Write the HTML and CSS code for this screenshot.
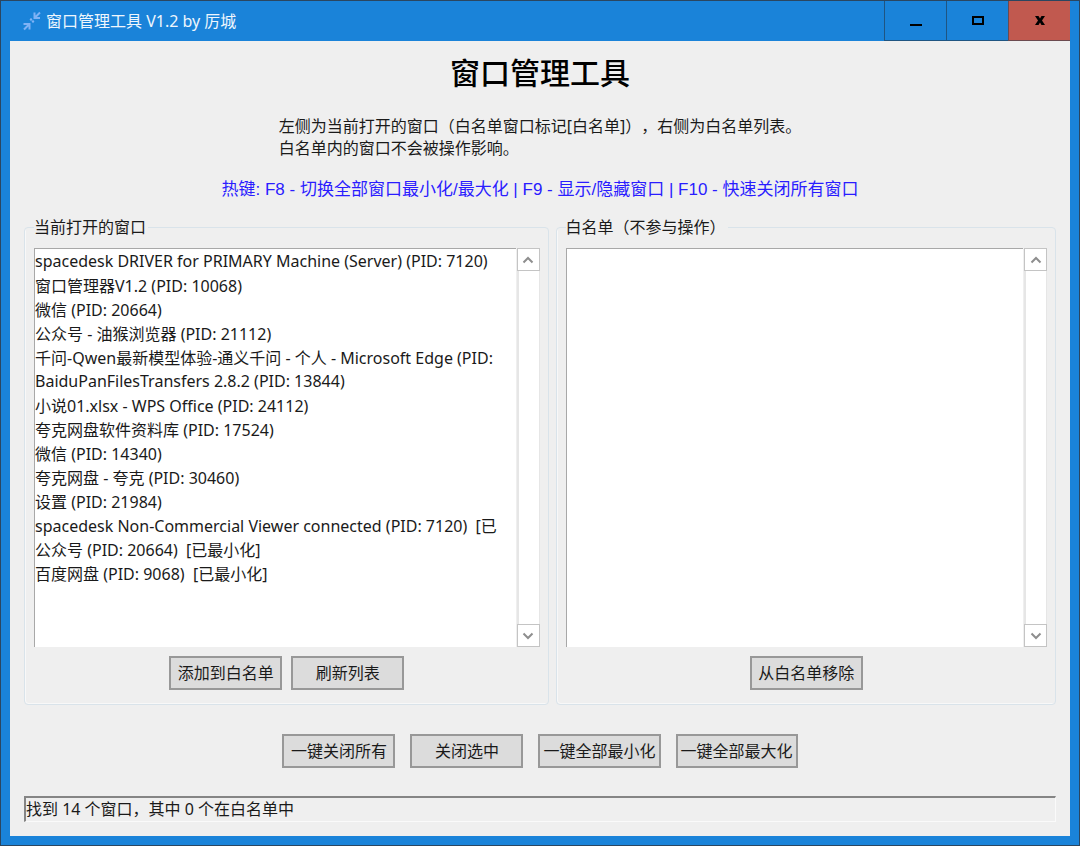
FILE: index.html
```html
<!DOCTYPE html>
<html lang="zh-CN">
<head>
<meta charset="utf-8">
<title>窗口管理工具 V1.2 by 厉城</title>
<link rel="stylesheet" href="styles.css">
</head>
<body>
<div class="window">
  <header class="titlebar">
    <svg class="app-icon" width="20" height="20" viewBox="0 0 20 20" fill="none" stroke="#7fb2f5" stroke-width="2" aria-hidden="true">
      <path d="M18 1.500 12.500 7M12.500 1.500V7H18M2 18.500 7.500 13M1.500 13H7.500V18.500"/>
      <circle cx="9" cy="8.500" r="1.200" fill="#7fb2f5" stroke="none"/>
      <circle cx="11" cy="10.500" r="1.200" fill="#7fb2f5" stroke="none"/>
    </svg>
    <span class="caption">窗口管理工具 V1.2 by 厉城</span>
    <div class="controls">
      <button class="control" aria-label="最小化"><svg width="14" height="12" viewBox="0 0 14 12"><path d="M1 9h12v2H1z"/></svg></button>
      <button class="control" aria-label="最大化"><svg width="14" height="12" viewBox="0 0 14 12"><path fill-rule="evenodd" d="M1 1h12v9H1zM3 3v5h8V3z"/></svg></button>
      <button class="control control-close" aria-label="关闭"><svg width="14" height="12" viewBox="0 0 14 12"><path d="M2 1h3.500L7 3.500 8.500 1H12L9 5.500 12 10H8.500L7 7.500 5.500 10H2L5 5.500z"/></svg></button>
    </div>
  </header>
  <main class="content">
    <h1 class="heading">窗口管理工具</h1>
    <p class="intro">左侧为当前打开的窗口（白名单窗口标记[白名单]），右侧为白名单列表。<br>白名单内的窗口不会被操作影响。</p>
    <p class="hotkeys">热键: F8 - 切换全部窗口最小化/最大化 | F9 - 显示/隐藏窗口 | F10 - 快速关闭所有窗口</p>
    <div class="groups">
      <fieldset class="group group-open">
        <legend class="legend" id="open-label">当前打开的窗口</legend>
        <div class="listbox">
          <select class="list" multiple size="14" aria-labelledby="open-label">
            <option>spacedesk DRIVER for PRIMARY Machine (Server) (PID: 7120)</option>
            <option>窗口管理器V1.2 (PID: 10068)</option>
            <option>微信 (PID: 20664)</option>
            <option>公众号 - 油猴浏览器 (PID: 21112)</option>
            <option>千问-Qwen最新模型体验-通义千问 - 个人 - Microsoft Edge (PID:</option>
            <option>BaiduPanFilesTransfers 2.8.2 (PID: 13844)</option>
            <option>小说01.xlsx - WPS Office (PID: 24112)</option>
            <option>夸克网盘软件资料库 (PID: 17524)</option>
            <option>微信 (PID: 14340)</option>
            <option>夸克网盘 - 夸克 (PID: 30460)</option>
            <option>设置 (PID: 21984)</option>
            <option>spacedesk Non-Commercial Viewer connected (PID: 7120)&nbsp; [已</option>
            <option>公众号 (PID: 20664)&nbsp; [已最小化]</option>
            <option>百度网盘 (PID: 9068)&nbsp; [已最小化]</option>
          </select>
          <div class="scrollbar">
            <button class="arrow" aria-label="向上滚动"><svg width="12" height="8" viewBox="0 0 12 8"><path d="M1.500 6.500 6 2l4.500 4.500"/></svg></button>
            <button class="arrow" aria-label="向下滚动"><svg width="12" height="8" viewBox="0 0 12 8"><path d="M1.500 1.500 6 6l4.500-4.500"/></svg></button>
          </div>
        </div>
        <div class="actions">
          <button class="btn">添加到白名单</button>
          <button class="btn">刷新列表</button>
        </div>
      </fieldset>
      <fieldset class="group group-white">
        <legend class="legend" id="white-label">白名单（不参与操作）</legend>
        <div class="listbox">
          <select class="list" multiple size="14" aria-labelledby="white-label"></select>
          <div class="scrollbar">
            <button class="arrow" aria-label="向上滚动"><svg width="12" height="8" viewBox="0 0 12 8"><path d="M1.500 6.500 6 2l4.500 4.500"/></svg></button>
            <button class="arrow" aria-label="向下滚动"><svg width="12" height="8" viewBox="0 0 12 8"><path d="M1.500 1.500 6 6l4.500-4.500"/></svg></button>
          </div>
        </div>
        <div class="actions">
          <button class="btn">从白名单移除</button>
        </div>
      </fieldset>
    </div>
    <div class="actions actions-main">
      <button class="btn">一键关闭所有</button>
      <button class="btn">关闭选中</button>
      <button class="btn">一键全部最小化</button>
      <button class="btn">一键全部最大化</button>
    </div>
    <div class="status" role="status">找到 14 个窗口，其中 0 个在白名单中</div>
  </main>
</div>
</body>
</html>
```

FILE: styles.css
```css
* {
  box-sizing: border-box;
}

body {
  margin: 0;
  color: #1a1a1a;
  font: 16px/22px "Noto Sans", "Noto Sans CJK SC", sans-serif;
  text-spacing-trim: space-all;
}

button,
select {
  margin: 0;
  color: inherit;
  font: inherit;
}

.window {
  display: flex;
  flex-direction: column;
  min-height: 100vh;
  padding: 0 9px 9px;
  border: 1px solid #2b4660;
  background: #1a83d9;
}

.titlebar {
  display: flex;
  align-items: center;
  height: 40px;
  padding-left: 12px;
}

.app-icon {
  margin-right: 4px;
}

.caption {
  flex: 1;
  color: #eef6fd;
}

.controls {
  display: flex;
  align-self: stretch;
}

.control {
  width: 62px;
  padding: 0;
  border: solid #1f5582;
  border-width: 0 0 1px 1px;
  background: #1a83d9;
}

.control-close {
  border-color: #6b4a50;
  background: #c1594f;
}

.content {
  flex: 1;
  display: flex;
  flex-direction: column;
  padding: 12px 14px 14px;
  background: #efefef;
}

.heading {
  margin: 0 0 22px;
  color: #000;
  font-size: 30px;
  font-weight: 500;
  line-height: 40px;
  text-align: center;
}

.intro {
  align-self: center;
  margin: 0 0 19px;
}

.hotkeys {
  margin: 0 0 14px;
  color: #2a1cff;
  font: 17px/24px "Liberation Sans", "Noto Sans CJK SC", sans-serif;
  text-align: center;
}

.groups {
  flex: 1;
  display: flex;
  gap: 7px;
}

.group {
  display: flex;
  flex-direction: column;
  min-width: 0;
  margin: 0;
  padding: 10px 8px 14px 9px;
  border: 1px solid #d9e3ea;
  border-radius: 4px;
  box-shadow: inset 1px -1px #f8f8f8;
}

.group-open {
  flex: 525 1 0;
}

.group-white {
  flex: 500 1 0;
}

.legend {
  padding: 0 2px 0 0;
}

.listbox {
  flex: 1;
  display: flex;
  gap: 1px;
}

.list {
  flex: 1;
  min-width: 0;
  padding: 0;
  border: solid #a8a8a8;
  border-width: 1px 0 0 1px;
  border-radius: 0;
  outline: 0;
  background: #fff;
  overflow: hidden;
}

.list option {
  display: flex;
  align-items: center;
  height: 24px;
  min-height: 24px;
  padding: 0;
}

.scrollbar {
  display: flex;
  flex-direction: column;
  justify-content: space-between;
  width: 23px;
  background: #fff;
  border: solid #e6e6e6;
  border-width: 0 1px 0 2px;
}

.arrow {
  display: flex;
  align-items: center;
  justify-content: center;
  height: 23px;
  margin: 0 -1px 0 -2px;
  padding: 0;
  border: 1px solid #c4c4c4;
  background: #fff;
}

.arrow path {
  fill: none;
  stroke: #8e8e8e;
  stroke-width: 2;
}

.actions {
  display: flex;
  justify-content: center;
  gap: 9px;
  margin-top: 9px;
}

.actions-main {
  gap: 15px;
  margin: 29px 0 28px;
}

.btn {
  min-width: 113px;
  height: 34px;
  padding: 0 3px;
  border: 2px solid #989898;
  background: #dcdcdc;
}

.status {
  height: 26px;
  border: solid #fafafa;
  border-width: 2px 1px 1px 2px;
  border-top-color: #858585;
  border-left-color: #858585;
}
```
